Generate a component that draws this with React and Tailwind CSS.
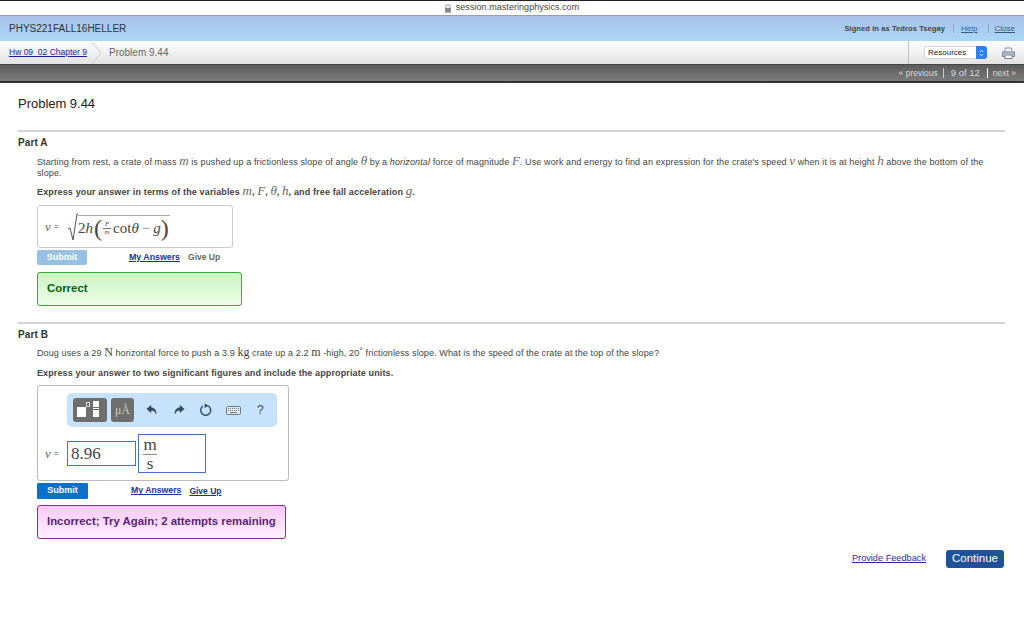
import React from "react";

const M = ({ children, className = "" }) => (
  <span className={`font-['Liberation_Serif',serif] italic text-[13px] leading-[11px] tracking-normal text-[#666] ${className}`}>{children}</span>
);
const R = ({ children }) => (
  <span className="font-['Liberation_Serif',serif] text-[12px] leading-[11px] tracking-normal text-[#444]">{children}</span>
);

const Lock = () => (
  <svg width="8" height="9" viewBox="0 0 8 9" className="mr-[4px]">
    <path d="M2 4V2.600a2 2 0 0 1 4 0V4" fill="none" stroke="#888" strokeWidth="1" />
    <rect x="1" y="4" width="6" height="4.600" fill="#888" />
  </svg>
);

const Printer = () => (
  <svg width="13" height="12" viewBox="0 0 13 12">
    <path d="M3 5V1h6l1 1v3" fill="#eef2f6" stroke="#8695aa" strokeWidth="1" />
    <path d="M.5 5h12v4.500H.5z" fill="#b4c0cf" stroke="#76869c" strokeWidth="1" />
    <rect x="3" y="8" width="7" height="3.500" fill="#fff" stroke="#76869c" strokeWidth="1" />
  </svg>
);

const TemplateIcon = () => (
  <svg width="34" height="24" viewBox="0 0 34 24">
    <rect x="4" y="9" width="9" height="10" fill="#fff" />
    <rect x="13.500" y="4.500" width="3" height="4" fill="none" stroke="#ddd" strokeWidth="1" />
    <rect x="20" y="3" width="6" height="6" fill="#fff" />
    <rect x="20" y="10" width="6" height="1" fill="#fff" />
    <rect x="20" y="12" width="6" height="7" fill="#fff" />
  </svg>
);

const Undo = () => (
  <svg width="12" height="12" viewBox="0 0 12 12">
    <path d="M5 1.500 0.800 5 5 8.500V6.200c2.600 0 4 1.100 4.800 3.600C10.400 6.200 8.600 3.800 5 3.700z" fill="#33475b" stroke="#33475b" strokeWidth=".5" strokeLinejoin="round" />
  </svg>
);
const Redo = () => (
  <svg width="12" height="12" viewBox="0 0 12 12" className="-scale-x-100">
    <path d="M5 1.500 0.800 5 5 8.500V6.200c2.600 0 4 1.100 4.800 3.600C10.400 6.200 8.600 3.800 5 3.700z" fill="#33475b" stroke="#33475b" strokeWidth=".5" strokeLinejoin="round" />
  </svg>
);
const Reset = () => (
  <svg width="14" height="14" viewBox="0 0 14 14">
    <path d="M8.600 2.600A5 5 0 1 1 4 3" fill="none" stroke="#33475b" strokeWidth="1.400" />
    <path d="M5.600 0.400 9.400 2.600 5.800 5z" fill="#33475b" />
  </svg>
);
const Keyboard = () => (
  <svg width="15" height="9" viewBox="0 0 15 9">
    <rect x=".5" y=".5" width="14" height="8" rx="1" fill="#e3e8ec" stroke="#6b7b88" />
    <path d="M2 2.500h11M2 4.500h11" stroke="#6b7b88" strokeDasharray="1 1" />
    <path d="M4 6.500h7" stroke="#6b7b88" />
  </svg>
);

export default function App() {
  return (
    <div className="w-[1024px] h-[640px] overflow-hidden bg-white flex flex-col font-['Liberation_Sans',Arial,sans-serif] text-[#333]">
      {/* browser url bar */}
      <div className="h-[16px] shrink-0 border-t border-t-[#222] border-b border-b-[#9a9eaa] flex items-center justify-center text-[9px] text-[#444] tracking-[0.05px] pr-[1px]">
        <Lock />
        session.masteringphysics.com
      </div>

      {/* course header */}
      <div className="h-[25px] shrink-0 bg-gradient-to-b from-[#a9c0ec] to-[#a8d8f4] flex items-center justify-between pl-[9px] pr-[9px]">
        <span className="text-[10px] text-[#333]">PHYS221FALL16HELLER</span>
        <div className="flex items-center text-[8px] text-[#444]">
          <span className="font-bold text-[7.500px] tracking-[0.1px]">Signed in as Tedros Tsegay</span>
          <span className="w-px h-[9px] bg-[#8fa3bd] ml-[8px] mr-[7px]" />
          <span className="underline text-[#3f5780]">Help</span>
          <span className="w-px h-[9px] bg-[#8fa3bd] ml-[10px] mr-[6px]" />
          <span className="underline text-[#3f5780]">Close</span>
        </div>
      </div>

      {/* breadcrumb */}
      <div className="h-[23px] shrink-0 bg-gradient-to-b from-white to-[#e2e2e2] flex items-center justify-between">
        <div className="flex items-center pl-[9px]">
          <span className="text-[8.500px] text-[#1a1ab0] underline">Hw 09_02 Chapter 9</span>
          <svg width="12" height="22" viewBox="0 0 12 22" className="ml-[4px]">
            <path d="M1 0 10 11 1 22" fill="none" stroke="#ccc" />
          </svg>
          <span className="text-[10px] text-[#666] ml-[6px]">Problem 9.44</span>
        </div>
        <div className="flex items-center h-full border-l border-l-[#c0c0c0] w-[116px] pl-[15px]">
          <div className="flex items-center h-[13px] w-[63px] rounded-[3px] border border-[#d5d5d5] bg-white">
            <span className="flex-1 text-[8px] text-[#222] pl-[3px]">Resources</span>
            <span className="w-[11px] h-[13px] -mr-px rounded-r-[3px] bg-[#2f7ff0] flex flex-col items-center justify-center gap-[1px]">
              <svg width="5" height="8" viewBox="0 0 5 8">
                <path d="M1 3 2.500 1.200 4 3M1 5 2.500 6.800 4 5" fill="none" stroke="#fff" strokeWidth=".8" />
              </svg>
            </span>
          </div>
          <span className="ml-[15px] flex"><Printer /></span>
        </div>
      </div>

      {/* dark pager */}
      <div className="h-[19px] shrink-0 bg-gradient-to-b from-[#5c5c5c] to-[#7c7c7c] border-t border-t-[#444] border-b-2 border-b-[#333] flex items-center justify-end pr-[8px] text-[8.500px] text-[#d8d8d8]">
        <span>« previous</span>
        <span className="w-px h-[10px] bg-[#ccc] ml-[5px] mr-[7px]" />
        <span className="text-[9.500px]">9 of 12</span>
        <span className="w-px h-[10px] bg-white ml-[7px] mr-[5px]" />
        <span>next »</span>
      </div>

      {/* page */}
      <main className="flex-1 pl-[18px] pr-[19px] flex flex-col">
        <h1 className="text-[13px] leading-[15px] text-[#222] tracking-[-0.02px] mt-[13px]">Problem 9.44</h1>

        <div className="h-[2px] bg-[#d2d2d2] mt-[19px]" />
        <h2 className="text-[10px] leading-[12px] font-bold text-[#333] tracking-[0.1px] mt-[5px]">Part A</h2>

        <section className="pl-[19px]">
          <p className="text-[9px] leading-[11px] text-[#444] tracking-[0.115px] mt-[6px] max-w-[955px]">
            Starting from rest, a crate of mass <M>m</M> is pushed up a frictionless slope of angle <M>θ</M> by a <i>horizontal</i> force of magnitude <M>F</M>. Use work and energy to find an expression for the crate's speed <M>v</M> when it is at height <M>h</M> above the bottom of the slope.
          </p>
          <p className="text-[9px] leading-[12px] font-bold text-[#444] tracking-[0.14px] mt-[6px]">
            Express your answer in terms of the variables <M className="font-normal">m</M>, <M className="font-normal">F</M>, <M className="font-normal">θ</M>, <M className="font-normal">h</M>, and free fall acceleration <M className="font-normal">g</M>.
          </p>

          <div className="w-[196px] h-[43px] mt-[7px] rounded-[3px] border border-[#ccc] flex items-center pl-[7px]">
            <M className="text-[10px]">v</M>
            <span className="text-[9px] text-[#555] ml-[3px]">=</span>
            <span className="ml-[8px] flex items-center h-[30px] font-['Liberation_Serif',serif] text-[#444]">
              <svg width="11" height="28" viewBox="0 0 11 28">
                <path d="M1 16 3 15 6 27 10 1H11" fill="none" stroke="#555" />
              </svg>
              <span className="border-t border-t-[#aaa] h-[26px] flex items-center text-[15px] pr-[1px] mt-[2px]">
                2<i>h</i>
                <span className="text-[24px] font-light leading-none ml-[1px]">(</span>
                <span className="flex flex-col items-center text-[7px] leading-[7px] italic mx-[1px]">
                  <span>F</span>
                  <span className="w-[8px] h-px bg-[#777]" />
                  <span>m</span>
                </span>
                <span className="ml-[1px]">cot</span><i>θ</i>
                <span className="mx-[3px] text-[#888]">−</span>
                <i>g</i>
                <span className="text-[24px] font-light leading-none">)</span>
              </span>
            </span>
          </div>

          <div className="flex items-center mt-[2px] h-[15px]">
            <span className="w-[50px] h-[15px] rounded-[2px] bg-[#98c0e2] text-white text-[9px] font-bold flex items-center justify-center">Submit</span>
            <span className="ml-[42px] text-[8.800px] font-bold text-[#1a2fa0] underline">My Answers</span>
            <span className="ml-[8px] text-[8.500px] font-bold text-[#666]">Give Up</span>
          </div>

          <div className="w-[205px] h-[34px] mt-[7px] rounded-[3px] border border-[#3aa63a] bg-gradient-to-b from-[#c8f5c0] to-[#effdea] flex items-center pl-[9px] text-[11.400px] font-bold text-[#0c5f0c]">
            Correct
          </div>
        </section>

        <div className="h-[2px] bg-[#d2d2d2] mt-[16px]" />
        <h2 className="text-[10px] leading-[12px] font-bold text-[#333] tracking-[0.1px] mt-[5px]">Part B</h2>

        <section className="pl-[19px]">
          <p className="text-[9px] leading-[11px] text-[#444] tracking-[0.11px] mt-[6px]">
            Doug uses a 29 <R>N</R> horizontal force to push a 3.9 <R>kg</R> crate up a 2.2 <R>m</R> -high, 20<span className="text-[9px] align-top leading-[8px]">°</span> frictionless slope. What is the speed of the crate at the top of the slope?
          </p>
          <p className="text-[9px] leading-[12px] font-bold text-[#444] tracking-[0.12px] mt-[8px]">
            Express your answer to two significant figures and include the appropriate units.
          </p>

          <div className="w-[252px] h-[96px] mt-[6px] rounded-[3px] border border-[#bbb] flex flex-col">
            <div className="ml-[29px] mt-[7px] w-[210px] h-[34px] rounded-[5px] bg-[#c7e2fb] flex items-center pl-[6px]">
              <span className="w-[34px] h-[24px] rounded-[3px] bg-[#6e6e6e] flex items-center justify-center">
                <TemplateIcon />
              </span>
              <span className="ml-[4px] w-[23px] h-[24px] rounded-[3px] bg-[#6e6e6e] flex items-center justify-center font-['Liberation_Serif',serif] text-[12px] text-[#ccc]">μÅ</span>
              <span className="ml-[12px] flex"><Undo /></span>
              <span className="ml-[15px] flex"><Redo /></span>
              <span className="ml-[14px] flex"><Reset /></span>
              <span className="ml-[13px] flex mt-[1px]"><Keyboard /></span>
              <span className="ml-[16px] text-[12px] text-[#33475b]">?</span>
            </div>
            <div className="flex items-center ml-[7px] mt-[7px]">
              <M className="text-[10px]">v</M>
              <span className="text-[9px] text-[#555] ml-[3px]">=</span>
              <span className="ml-[8px] w-[69px] h-[25px] border border-[#4a6fc8] pl-[3px] flex items-center font-['Liberation_Serif',serif] text-[17px] text-[#444]">8.96</span>
              <span className="ml-[2px] w-[68px] h-[39px] border border-[#4a6fc8] pl-[4px] flex flex-col items-start font-['Liberation_Serif',serif] text-[17px] text-[#444]">
                <span className="w-[14px] text-center border-b border-b-[#888] leading-[19px]">m</span>
                <span className="w-[14px] text-center leading-[18px]">s</span>
              </span>
            </div>
          </div>

          <div className="flex items-center mt-[2px] h-[16px]">
            <span className="w-[51px] h-[16px] rounded-[1px] bg-[#0a72cc] text-white text-[9px] font-bold flex items-center justify-center">Submit</span>
            <span className="ml-[43px] text-[8.700px] font-bold text-[#1a2fa0] underline">My Answers</span>
            <span className="ml-[8px] text-[8.500px] font-bold text-[#1a2fa0] underline">Give Up</span>
          </div>

          <div className="w-[249px] h-[34px] mt-[6px] rounded-[3px] border border-[#8a2a90] bg-gradient-to-b from-[#fbc9fb] to-[#fff0ff] flex items-center pl-[9px] text-[11.400px] font-bold text-[#5a1f78]">
            Incorrect; Try Again; 2 attempts remaining
          </div>
        </section>

        <div className="flex items-center justify-end mt-[11px] pr-[1px]">
          <span className="text-[9.200px] text-[#2a2aa8] underline">Provide Feedback</span>
          <span className="ml-[20px] w-[58px] h-[18px] rounded-[3px] bg-[#1f5299] text-white text-[11.500px] flex items-center justify-center">Continue</span>
        </div>
      </main>
    </div>
  );
}
